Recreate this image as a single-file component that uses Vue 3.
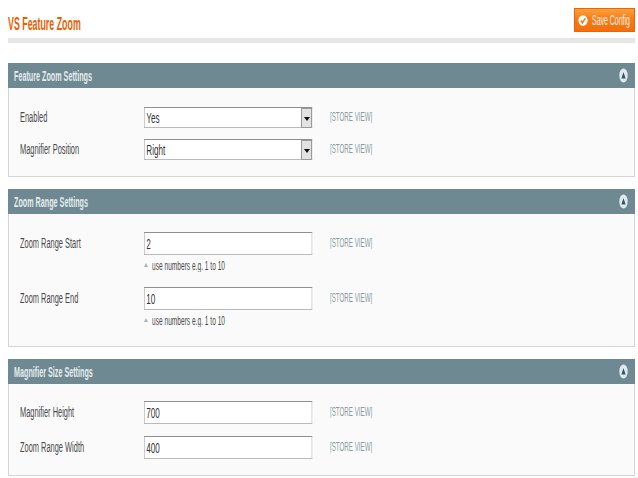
<script setup>
const sections = [
  { title: 'Feature Zoom Settings', cls: 's1', rows: [
    { label: 'Enabled', value: 'Yes', select: true, options: ['Yes', 'No'] },
    { label: 'Magnifier Position', value: 'Right', select: true, options: ['Right', 'Left'] },
  ]},
  { title: 'Zoom Range Settings', cls: 's2', rows: [
    { label: 'Zoom Range Start', value: '2', note: 'use numbers e.g. 1 to 10' },
    { label: 'Zoom Range End', value: '10', note: 'use numbers e.g. 1 to 10' },
  ]},
  { title: 'Magnifier Size Settings', cls: 's3', rows: [
    { label: 'Magnifier Height', value: '700' },
    { label: 'Zoom Range Width', value: '400' },
  ]},
]
</script>

<template>
  <div class="page">
    <header class="head">
      <h3 class="title"><span class="sq">VS Feature Zoom</span></h3>
      <button class="save" type="button">
        <svg class="check" width="10" height="11" viewBox="0 0 10 11">
          <ellipse cx="5" cy="5.5" rx="4.6" ry="5.2" fill="#fff" />
          <path d="M2.8 5.6 4.5 7.8 7.2 3.4" fill="none" stroke="#f77c16" stroke-width="1.6" />
        </svg>
        <span class="sq save-text">Save Config</span>
      </button>
    </header>
    <section v-for="s in sections" :key="s.title" class="box" :class="s.cls">
      <div class="bar">
        <span class="sq bar-title">{{ s.title }}</span>
        <svg class="toggle" width="9" height="15" viewBox="0 0 9 15">
          <ellipse cx="4.5" cy="7.5" rx="4.2" ry="7" fill="#dfeaec" />
          <path d="M4.5 4 6.6 10.5H2.4Z" fill="#2f5666" />
        </svg>
      </div>
      <div class="body">
        <div v-for="r in s.rows" :key="r.label" class="row">
          <label class="label"><span class="sq">{{ r.label }}</span></label>
          <div class="control">
            <div v-if="r.select" class="select-wrap">
              <select class="field" :value="r.value">
                <option v-for="o in r.options" :key="o">{{ o }}</option>
              </select>
              <span class="arrow"></span>
            </div>
            <input v-else class="field" type="text" :value="r.value" />
            <p v-if="r.note" class="note"><i class="tri"></i><span class="sq">{{ r.note }}</span></p>
          </div>
          <span class="scope"><span class="sq">[STORE VIEW]</span></span>
        </div>
      </div>
    </section>
  </div>
</template>

<style>
html, body { margin: 0; background: #fff; }
</style>

<style scoped>
.page {
  width: 638px;
  height: 478px;
  overflow: hidden;
  box-sizing: border-box;
  padding: 8px 3px 0 8px;
  font-family: "Liberation Sans", Arial, sans-serif;
  font-size: 12px;
  color: #4a4a4a;
}
.sq {
  display: inline-block;
  white-space: nowrap;
  transform: scale(0.62, 1.15);
  transform-origin: left center;
}
.head {
  display: flex;
  justify-content: space-between;
  align-items: flex-start;
  height: 30px;
  border-bottom: 5px solid #e6e6e6;
  margin-bottom: 20px;
}
.title {
  margin: 7px 0 0;
  font-size: 15px;
  line-height: 18px;
  font-weight: bold;
  color: #eb5e00;
  width: 80px;
}
.title .sq { transform: scale(0.59, 1.2); }
.save {
  display: flex;
  align-items: center;
  width: 61px;
  height: 24px;
  padding: 0 0 0 3px;
  border: 1px solid #ed6502;
  background: linear-gradient(#fba13c, #f77c16 45%, #f36f0b);
  color: #fff;
  font: 12px "Liberation Sans", Arial, sans-serif;
  overflow: hidden;
}
.check { flex: none; }
.save-text { margin-left: 4px; transform: scale(0.58, 1.15); color: #fff3e6; }
.box { margin-bottom: 12px; }
.bar {
  display: flex;
  justify-content: space-between;
  align-items: center;
  height: 25px;
  padding: 0 7px 0 6px;
  background: #6f8992;
}
.bar-title {
  color: #e4ecee;
  font-weight: bold;
  font-size: 12px;
  transform: scale(0.6, 1.15);
}
.toggle { flex: none; }
.body {
  box-sizing: border-box;
  background: #fafafa;
  border: 1px solid #d6d6d6;
  border-top: 0;
  padding: 19px 11px 0;
}
.s1 .body { height: 89px; }
.s2 .body { height: 133px; padding-top: 18px; }
.s3 .body { height: 92px; padding-top: 17px; }
.row {
  display: grid;
  grid-template-columns: 124px 168px auto;
  margin-bottom: 11px;
}
.s2 .row { margin-bottom: 15px; }
.s3 .row { margin-bottom: 12px; }
.label { line-height: 21px; }
.s2 .label, .s3 .label { line-height: 23px; }
.control { width: 168px; }
.scope {
  padding-left: 18px;
  line-height: 18px;
  font-size: 10.5px;
  color: #8a9aa0;
}
.s2 .scope, .s3 .scope { line-height: 20px; }
.scope .sq { transform: scale(0.59, 1.15); }
.select-wrap { position: relative; height: 21px; }
.field {
  display: block;
  box-sizing: border-box;
  width: 290px;
  height: 23px;
  margin: 0;
  padding: 0 3px;
  background: #fff;
  border: 1px solid #bbb;
  border-width: 1px 1.7px;
  border-top-color: #8f8f8f;
  border-left-color: #a5a5a5;
  border-radius: 0;
  outline: none;
  appearance: none;
  font-family: "Liberation Sans", sans-serif;
  font-size: 14px;
  color: #333;
  transform: scaleX(0.58);
  transform-origin: left center;
}
.select-wrap .field { height: 21px; }
.arrow {
  position: absolute;
  top: 1px;
  right: 0;
  box-sizing: border-box;
  width: 11px;
  height: 20px;
  background: #e2e2e2;
  border: 1px solid #9a9a9a;
}
.arrow::after {
  content: "";
  position: absolute;
  left: 2px;
  top: 8px;
  border-left: 3px solid transparent;
  border-right: 3px solid transparent;
  border-top: 4px solid #111;
}
.note {
  display: flex;
  align-items: center;
  height: 12px;
  margin: 4px 0 0;
  font-size: 11px;
  color: #4a4a4a;
}
.note .sq { transform: scale(0.6, 1.15); }
.s2 .row { margin-bottom: 16px; }
.tri {
  flex: none;
  margin-right: 4px;
  border-left: 2px solid transparent;
  border-right: 2px solid transparent;
  border-bottom: 4px solid #a9b4b8;
}
</style>
